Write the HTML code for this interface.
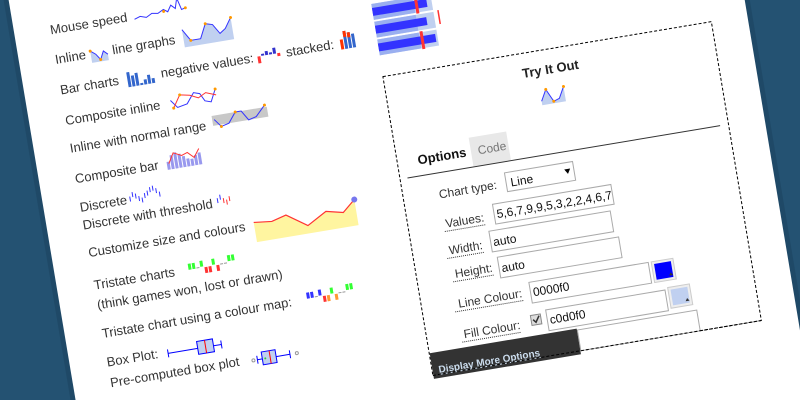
<!DOCTYPE html>
<html><head><meta charset="utf-8"><style>
html,body{margin:0;padding:0;width:800px;height:400px;overflow:hidden;background:#245272}
svg{display:block}
text{font-family:"Liberation Sans",Arial,sans-serif}
</style></head><body>
<svg width="800" height="400" viewBox="0 0 800 400" xmlns="http://www.w3.org/2000/svg">
<rect width="800" height="400" fill="#245272"/>
<g transform="rotate(-9.5 400 200)">
<rect x="42" y="-250" width="736" height="900" fill="#1d4460" opacity="0.6"/>
<rect x="47" y="-250" width="726" height="900" fill="#fff"/>
<g font-size="13" fill="#333">
<text x="83" y="-21">Mouse speed</text>
<text x="83" y="9">Inline</text>
<text x="141" y="9">line graphs</text>
<text x="83" y="40">Bar charts</text>
<text x="185" y="40">negative values:</text>
<text x="312" y="40">stacked:</text>
<text x="83" y="71">Composite inline</text>
<text x="83" y="99">Inline with normal range</text>
<text x="83" y="130">Composite bar</text>
<text x="83" y="159">Discrete</text>
<text x="83" y="177">Discrete with threshold</text>
<text x="84" y="205">Customize size and colours</text>
<text x="84" y="238">Tristate charts</text>
<text x="84" y="258">(think games won, lost or drawn)</text>
<text x="84" y="287">Tristate chart using a colour map:</text>
<text x="84" y="316">Box Plot:</text>
<text x="84" y="337">Pre-computed box plot</text>
<text x="404" y="-6">Bullet chart</text>
</g>
<!-- mouse speed -->
<polyline points="168,-22 174,-24 180,-22 186,-25 192,-24 198,-27 202,-24 206,-30 210,-26 213,-36 216,-24 220,-25" fill="none" stroke="#33f" stroke-width="1"/>
<circle cx="213" cy="-36" r="1.5" fill="#f90"/><circle cx="220" cy="-25" r="1.5" fill="#f90"/><circle cx="198" cy="-25" r="1.5" fill="#f90"/>
<!-- inline small -->
<polygon points="119,14 119,2 124,6 128,12 132,4 136,8 136,14" fill="#c0d0f0"/>
<polyline points="119,2 124,6 128,12 132,4 136,8" fill="none" stroke="#33f"/>
<circle cx="128" cy="12" r="1.5" fill="#f90"/><circle cx="119" cy="2" r="1.5" fill="#f90"/>
<!-- inline big -->
<polygon points="213,14 213,-4 220,8 230,8 237,-6 244,-4 250,6 256,2 263,-8 263,14" fill="#c0d0f0"/>
<polyline points="213,-4 220,8 230,8 237,-6 244,-4 250,6 256,2 263,-8" fill="none" stroke="#33f"/>
<circle cx="220" cy="8" r="1.5" fill="#f90"/><circle cx="237" cy="-6" r="1.5" fill="#f90"/><circle cx="263" cy="-8" r="1.5" fill="#f90"/>
<!-- bar charts -->
<g fill="#3366cc"><rect x="151" y="29" width="3" height="15"/><rect x="155" y="33" width="3" height="11"/><rect x="159" y="31" width="3" height="13"/><rect x="163" y="42" width="3" height="2"/><rect x="167" y="39" width="3" height="5"/><rect x="171" y="35" width="3" height="9"/><rect x="175" y="39" width="3" height="5"/></g>
<g><rect x="283" y="35" width="3" height="7" fill="#f33"/><rect x="287" y="33" width="3" height="2" fill="#33c"/><rect x="291" y="31" width="3" height="4" fill="#33c"/><rect x="295" y="33" width="3" height="2" fill="#33c"/><rect x="299" y="29" width="3" height="6" fill="#33c"/><rect x="303" y="35" width="3" height="3" fill="#f33"/></g>
<g><rect x="367" y="32" width="3" height="10" fill="#f30"/><rect x="371" y="24" width="3" height="18" fill="#36c"/><rect x="371" y="24" width="3" height="6" fill="#f30"/><rect x="375" y="26" width="3" height="16" fill="#36c"/><rect x="375" y="26" width="3" height="5" fill="#f30"/><rect x="379" y="28" width="3" height="14" fill="#36c"/></g>
<!-- composite inline -->
<polyline points="190,64 196,72 206,70 214,60 220,62 224,70 230,72 236,60" fill="none" stroke="#33f"/>
<polyline points="192,72 200,60 210,62 218,66 226,62 236,66" fill="none" stroke="#f33"/>
<circle cx="192" cy="72" r="1.5" fill="#f90"/><circle cx="236" cy="60" r="1.5" fill="#f90"/><circle cx="200" cy="60" r="1.5" fill="#f90"/>
<!-- normal range -->
<rect x="228" y="86" width="56" height="10" fill="#c8c8c8"/>
<polyline points="230,90 236,98 244,96 252,86 258,86 264,96 272,94 282,84" fill="none" stroke="#33f"/>
<circle cx="236" cy="98" r="1.5" fill="#f90"/><circle cx="252" cy="86" r="1.5" fill="#f90"/><circle cx="282" cy="84" r="1.5" fill="#f90"/>
<!-- composite bar -->
<g fill="#9999ee"><rect x="176" y="124" width="3" height="8"/><rect x="180" y="118" width="3" height="14"/><rect x="184" y="116" width="3" height="16"/><rect x="188" y="118" width="3" height="14"/><rect x="192" y="121" width="3" height="11"/><rect x="196" y="124" width="3" height="8"/><rect x="200" y="125" width="3" height="7"/><rect x="204" y="122" width="3" height="10"/><rect x="208" y="120" width="3" height="12"/></g>
<polyline points="178,126 184,116 192,120 198,118 204,124 210,116" fill="none" stroke="#f33"/>
<!-- discrete -->
<g stroke="#33f" stroke-width="1"><line x1="134" y1="152" x2="134" y2="157"/><line x1="137" y1="148" x2="137" y2="153"/><line x1="140" y1="150" x2="140" y2="155"/><line x1="143" y1="153" x2="143" y2="158"/><line x1="146" y1="155" x2="146" y2="160"/><line x1="149" y1="151" x2="149" y2="156"/><line x1="152" y1="149" x2="152" y2="154"/><line x1="155" y1="146" x2="155" y2="151"/><line x1="158" y1="145" x2="158" y2="150"/><line x1="161" y1="148" x2="161" y2="153"/><line x1="164" y1="152" x2="164" y2="157"/></g>
<g stroke-width="1"><line x1="220" y1="168" x2="220" y2="173" stroke="#33f"/><line x1="223" y1="165" x2="223" y2="170" stroke="#33f"/><line x1="226" y1="169" x2="226" y2="174" stroke="#f33"/><line x1="229" y1="171" x2="229" y2="176" stroke="#f33"/><line x1="232" y1="168" x2="232" y2="173" stroke="#f33"/></g>
<!-- customize -->
<polygon points="252,218 252,198 270,200 285,196 305,210 325,199 342,203 355,192 355,218" fill="#fff5a0"/>
<polyline points="252,198 270,200 285,196 305,210 325,199 342,203 355,192" fill="none" stroke="#f33" stroke-width="1.2"/>
<circle cx="355" cy="192" r="3" fill="#7777ee"/>
<!-- tristate -->
<g><rect x="180" y="228" width="3" height="6" fill="#3f3"/><rect x="184" y="228" width="3" height="6" fill="#3f3"/><rect x="188" y="233" width="3" height="1" fill="#999"/><rect x="192" y="227" width="3" height="6" fill="#3f3"/><rect x="196" y="234" width="3" height="6" fill="#f33"/><rect x="200" y="234" width="3" height="6" fill="#f33"/><rect x="204" y="227" width="3" height="6" fill="#3f3"/><rect x="208" y="234" width="3" height="6" fill="#f33"/><rect x="212" y="233" width="3" height="1" fill="#999"/><rect x="216" y="233" width="3" height="1" fill="#999"/><rect x="220" y="226" width="3" height="6" fill="#3f3"/><rect x="224" y="226" width="3" height="6" fill="#3f3"/></g>
<g><rect x="292" y="276" width="3" height="6" fill="#33f"/><rect x="296" y="276" width="3" height="6" fill="#33f"/><rect x="300" y="281" width="3" height="1" fill="#999"/><rect x="304" y="275" width="3" height="6" fill="#33f"/><rect x="308" y="282" width="3" height="6" fill="#f33"/><rect x="312" y="282" width="3" height="6" fill="#f93"/><rect x="316" y="275" width="3" height="6" fill="#3f3"/><rect x="320" y="282" width="3" height="6" fill="#f93"/><rect x="324" y="281" width="3" height="1" fill="#999"/><rect x="328" y="281" width="3" height="1" fill="#999"/><rect x="332" y="274" width="3" height="6" fill="#3f3"/><rect x="336" y="274" width="3" height="6" fill="#3f3"/></g>
<!-- box plots -->
<g stroke="#00f" stroke-width="1"><line x1="146" y1="309" x2="146" y2="317"/><line x1="146" y1="313" x2="176" y2="313"/><rect x="176" y="306" width="16" height="13" fill="#c0d0f0" stroke="#00f"/><line x1="192" y1="313" x2="200" y2="313"/><line x1="200" y1="309" x2="200" y2="317"/></g>
<line x1="184" y1="306" x2="184" y2="319" stroke="#f00"/>
<circle cx="229" cy="334" r="1.5" fill="none" stroke="#999"/>
<g stroke="#00f" stroke-width="1"><line x1="233" y1="330" x2="233" y2="338"/><line x1="233" y1="334" x2="238" y2="334"/><rect x="238" y="327" width="14" height="13" fill="#c0d0f0" stroke="#00f"/><line x1="252" y1="334" x2="266" y2="334"/><line x1="266" y1="330" x2="266" y2="338"/></g>
<line x1="246" y1="327" x2="246" y2="340" stroke="#f00"/><circle cx="241" cy="334" r="1" fill="#3c3"/>
<circle cx="273" cy="334" r="1.5" fill="none" stroke="#999"/>
<!-- bullet -->
<g>
<rect x="404" y="2" width="60" height="16" fill="#c0d0f0"/><rect x="404" y="2" width="42" height="16" fill="#9aaff0"/><rect x="404" y="6" width="55" height="8" fill="#33f"/><rect x="447" y="1" width="3" height="18" fill="#f33"/>
<rect x="404" y="20" width="60" height="16" fill="#c0d0f0"/><rect x="404" y="20" width="42" height="16" fill="#9aaff0"/><rect x="404" y="24" width="52" height="8" fill="#33f"/><rect x="468" y="19" width="1.5" height="14" fill="#f33"/>
<rect x="404" y="38" width="60" height="16" fill="#c0d0f0"/><rect x="404" y="38" width="42" height="16" fill="#9aaff0"/><rect x="404" y="42" width="58" height="8" fill="#33f"/><rect x="447" y="37" width="3" height="18" fill="#f33"/>
</g>
<!-- try it out box -->
<rect x="403.5" y="75.5" width="333" height="303" fill="#fff" stroke="#000" stroke-dasharray="3,2"/>
<text x="570" y="100" font-size="13" font-weight="bold" text-anchor="middle" fill="#222">Try It Out</text>
<polygon points="556,130 556,126 562,115 568,128 574,126 580,115 580,130" fill="#c0d0f0"/>
<polyline points="556,126 562,115 568,128 574,126 580,115" fill="none" stroke="#33f"/>
<circle cx="562" cy="115" r="1.5" fill="#f90"/><circle cx="568" cy="128" r="1.5" fill="#f90"/><circle cx="580" cy="115" r="1.5" fill="#f90"/>
<rect x="478" y="150" width="38" height="29" fill="#e8e8e8"/>
<text x="424" y="168" font-size="13" font-weight="bold" fill="#111">Options</text>
<text x="485" y="168" font-size="12" fill="#777">Code</text>
<line x1="411" y1="179.5" x2="728" y2="179.5" stroke="#333"/>
<g font-size="12" fill="#333" text-anchor="end">
<text x="498" y="205">Chart type:</text>
<text x="480" y="235">Values:</text>
<text x="474" y="262">Width:</text>
<text x="480" y="286">Height:</text>
<text x="505" y="316">Line Colour:</text>
<text x="498" y="347">Fill Colour:</text>
</g>
<g stroke="#333" stroke-dasharray="1,1" stroke-width="1">
<line x1="439" y1="238.5" x2="480" y2="238.5"/>
<line x1="437" y1="265.5" x2="474" y2="265.5"/>
<line x1="439" y1="289.5" x2="480" y2="289.5"/>
<line x1="436" y1="319.5" x2="505" y2="319.5"/>
<line x1="438" y1="350.5" x2="498" y2="350.5"/>
</g>
<g fill="#fff" stroke="#aaa">
<rect x="507.5" y="190.5" width="69" height="19"/>
<rect x="490.5" y="219.5" width="120" height="20"/>
<rect x="482.5" y="245.5" width="123" height="21"/>
<rect x="486.5" y="272.5" width="123" height="21"/>
<rect x="513.5" y="302.5" width="121" height="21"/>
<rect x="525.5" y="332.5" width="121" height="21"/>
<rect x="553.5" y="357.5" width="121" height="21"/>
</g>
<polygon points="567,197 573,197 570,202" fill="#000"/>
<g font-size="12" fill="#111">
<text x="512" y="205">Line</text>
<text x="493" y="234">5,6,7,9,9,5,3,2,2,4,6,7</text>
<text x="485" y="261">auto</text>
<text x="489" y="288">auto</text>
<text x="516" y="317">0000f0</text>
<text x="528" y="347">c0d0f0</text>
</g>
<rect x="637.5" y="302.5" width="22" height="21" fill="#eee" stroke="#ccc"/><rect x="640" y="305" width="17" height="16" fill="#00f"/><polygon points="653,319 657,319 655,316" fill="#333"/>
<rect x="649.5" y="330.5" width="22" height="21" fill="#eee" stroke="#ccc"/><rect x="652" y="333" width="17" height="16" fill="#c0d0f0"/><polygon points="665,347 669,347 667,344" fill="#333"/>
<rect x="509.5" y="335.5" width="10" height="10" fill="#ddd" stroke="#888"/><path d="M511.5,340 L514,343 L518,337" fill="none" stroke="#333" stroke-width="1.5"/>
<rect x="404" y="356" width="149" height="26" fill="#333"/>
<text x="410" y="377" font-size="10" font-weight="bold" fill="#cde" text-decoration="underline">Display More Options</text>
<line x1="403.5" y1="378.5" x2="736.5" y2="378.5" stroke="#000" stroke-dasharray="3,2"/>
</g>
</svg>
</body></html>
